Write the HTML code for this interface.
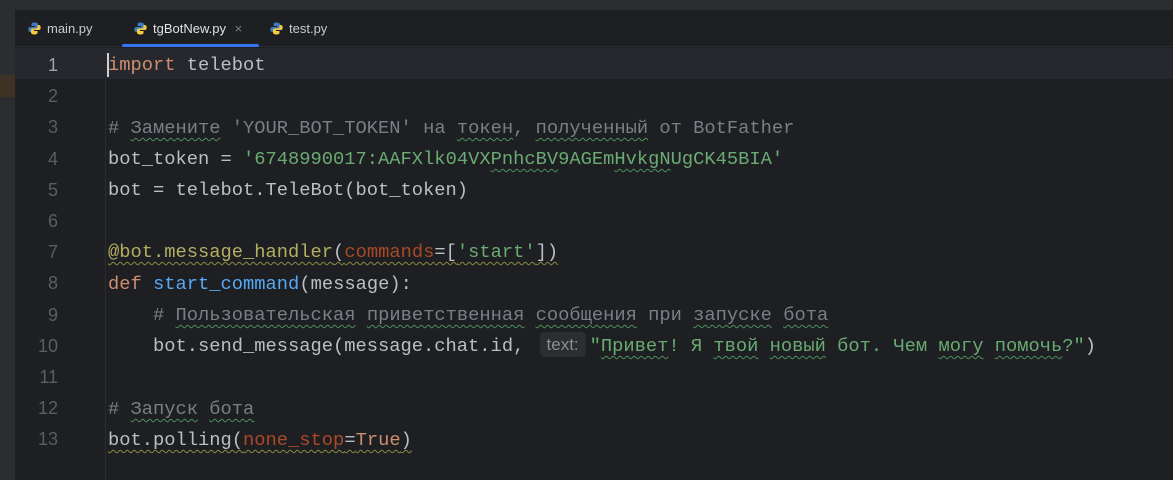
<!DOCTYPE html>
<html><head><meta charset="utf-8"><style>
*{margin:0;padding:0;box-sizing:border-box}
body{width:1173px;height:480px;background:#1e1f22;overflow:hidden;position:relative;font-family:"Liberation Mono","DejaVu Sans Mono",monospace}
.top{position:absolute;left:0;top:0;width:1173px;height:10px;background:#2b2d30}
.left{position:absolute;left:0;top:10px;width:15px;height:470px;background:#2b2d30}
.brown{position:absolute;left:0;top:75px;width:15px;height:22px;background:#3d3223}
.tabs{position:absolute;left:15px;top:10px;right:0;height:37px;background:#1e1f22;border-bottom:1px solid #2b2d30}
.tab{position:absolute;top:10px;font-family:"Liberation Sans",sans-serif;font-size:13px;color:#c9cbd0}
.ul{position:absolute;left:122px;top:44px;width:137px;height:3px;background:#3574f0;border-radius:2px}
.hl{position:absolute;left:15px;top:48px;width:1158px;height:31px;background:#26282e}
.sep{position:absolute;left:105px;top:79px;width:1px;height:401px;background:#2b2d30}
.ln{position:absolute;width:58px;text-align:right;left:0;font-size:18px;color:#5a5d63;font-family:"Liberation Sans",sans-serif}
.code{position:absolute;left:108px;font-size:18.75px;color:#bcbec4;white-space:pre;line-height:31px}
.k{color:#cf8e6d}.s{color:#6aab73}.c{color:#7a7e85}.d{color:#b3ae60}.f{color:#56a8f5}.p{color:#aa4926}
.w{text-decoration:underline wavy #4e8f5a;text-decoration-thickness:1px;text-underline-offset:4px}
.wy{text-decoration:underline wavy #8c8a40;text-decoration-thickness:1px;text-underline-offset:4px}
.inl{display:inline-block;width:46px;text-align:center;font-family:"Liberation Sans",sans-serif;font-size:17px;color:#8b8e94;background:#2b2d30;border-radius:4px;line-height:25px;height:25px;vertical-align:1px;margin-right:4px;margin-left:4px}
.py{display:inline-block;width:13px;height:13px;vertical-align:-2px;margin-right:6px}
</style></head><body>
<div class="top"></div><div class="left"></div><div class="brown"></div>
<div class="tabs"></div>
<svg width="0" height="0" style="position:absolute"><defs><g id="py"><path d="M6.5 0.5C3.5 0.5 3.5 1.8 3.5 2.5V4H7V5H2.2C1 5 0.3 6 0.3 7.5S1 10 2.2 10H3.5V8.3C3.5 7.2 4.4 6.5 5.3 6.5H8.5C9.4 6.5 10 5.8 10 5V2.5C10 1.5 9 0.5 6.5 0.5Z" fill="#3d7bbf"/><path d="M6.5 12.5C9.5 12.5 9.5 11.2 9.5 10.5V9H6V8H10.8C12 8 12.7 7 12.7 5.5S12 3 10.8 3H9.5V4.7C9.5 5.8 8.6 6.5 7.7 6.5H4.5C3.6 6.5 3 7.2 3 8V10.5C3 11.5 4 12.5 6.5 12.5Z" fill="#f5c942"/></g></defs></svg>
<div class="tab" style="left:28px;top:21px"><svg class="py" viewBox="0 0 13 13"><use href="#py"/></svg>main.py</div>
<div class="tab" style="left:134px;top:21px;color:#dfe1e5"><svg class="py" viewBox="0 0 13 13"><use href="#py"/></svg>tgBotNew.py <span style="color:#7a7e85;margin-left:5px">×</span></div>
<div class="tab" style="left:270px;top:21px"><svg class="py" viewBox="0 0 13 13"><use href="#py"/></svg>test.py</div>
<div class="ul"></div>
<div class="hl"></div>
<div class="sep"></div>
<div style="position:absolute;left:107px;top:53px;width:2px;height:24px;background:#ced0d6"></div>
<div class="ln" style="top:55px;color:#a1a3ab">1</div>
<div class="ln" style="top:86px">2</div>
<div class="ln" style="top:117px">3</div>
<div class="ln" style="top:149px">4</div>
<div class="ln" style="top:180px">5</div>
<div class="ln" style="top:211px">6</div>
<div class="ln" style="top:242px">7</div>
<div class="ln" style="top:273px">8</div>
<div class="ln" style="top:305px">9</div>
<div class="ln" style="top:336px">10</div>
<div class="ln" style="top:367px">11</div>
<div class="ln" style="top:398px">12</div>
<div class="ln" style="top:429px">13</div>
<div class="code" style="top:50px"><span class="k">import</span> telebot</div>
<div class="code" style="top:113px"><span class="c"># <span class="w">Замените</span> 'YOUR_BOT_TOKEN' на <span class="w">токен</span>, <span class="w">полученный</span> от BotFather</span></div>
<div class="code" style="top:144px">bot_token = <span class="s">'6748990017:AAFXlk04VX<span class="w">PnhcBV</span>9AGEm<span class="w">HvkgN</span>UgCK45BIA'</span></div>
<div class="code" style="top:175px">bot = telebot.TeleBot(bot_token)</div>
<div class="code" style="top:237px"><span class="wy"><span class="d">@bot.message_handler</span>(<span class="p">commands</span>=[<span class="s">'start'</span>])</span></div>
<div class="code" style="top:269px"><span class="k">def</span> <span class="f">start_command</span>(message):</div>
<div class="code" style="top:300px">    <span class="c"># <span class="w">Пользовательская</span> <span class="w">приветственная</span> <span class="w">сообщения</span> при <span class="w">запуске</span> <span class="w">бота</span></span></div>
<div class="code" style="top:331px">    bot.send_message(message.chat.id, <span class="inl">text:</span><span class="s">"<span class="w">Привет</span>! Я <span class="w">твой</span> <span class="w">новый</span> бот. Чем <span class="w">могу</span> <span class="w">помочь</span>?"</span>)</div>
<div class="code" style="top:394px"><span class="c"># <span class="w">Запуск</span> <span class="w">бота</span></span></div>
<div class="code" style="top:425px"><span class="wy">bot.polling(<span class="p">none_stop</span>=<span class="k">True</span>)</span></div>
</body></html>
